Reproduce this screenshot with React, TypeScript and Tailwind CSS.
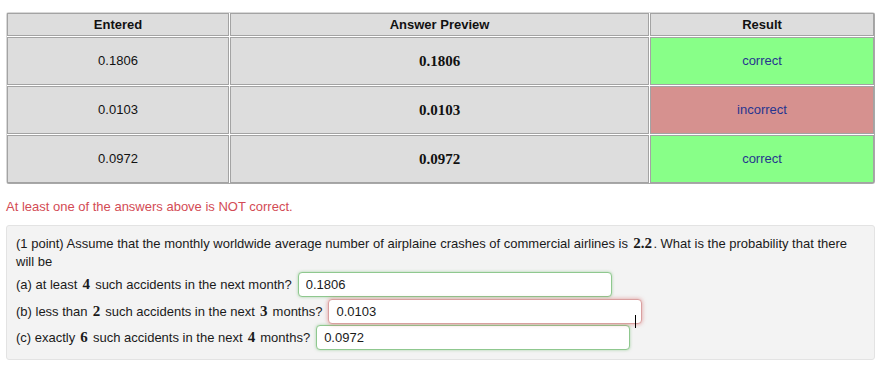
import React from "react";

const ROWS = [
  { entered: "0.1806", preview: "0.1806", ok: true },
  { entered: "0.0103", preview: "0.0103", ok: false },
  { entered: "0.0972", preview: "0.0972", ok: true },
];

const cell =
  "flex items-center justify-center border border-[#a3a3a3] bg-[#dddddd]";

function Num({ children }: { children: React.ReactNode }) {
  return (
    <b className="font-['Liberation_Serif',serif] text-[15px] font-bold">
      {children}
    </b>
  );
}

// inline getallen in de vraag hebben wat extra ruimte (zoals mathjax)
function M({ children }: { children: React.ReactNode }) {
  return (
    <b className="mx-[1.5px] font-['Liberation_Serif',serif] text-[15px] font-bold">
      {children}
    </b>
  );
}

export default function App() {
  return (
    <main className="min-h-screen bg-white pl-[6px] pt-[12px] font-['Liberation_Sans',Arial,sans-serif] text-[13px] text-[#111]">
      {/* resultaten tabel */}
      <div className="grid w-[869px] grid-cols-[222px_419px_224px] gap-px rounded-[3px] border border-t-[#d8d8d8] border-l-[#d8d8d8] border-r-[#a8a8a8] border-b-[#a8a8a8] bg-white">
        <div className={`${cell} h-[23px] font-bold`}>Entered</div>
        <div className={`${cell} h-[23px] font-bold`}>Answer Preview</div>
        <div className={`${cell} h-[23px] font-bold`}>Result</div>
        {ROWS.map((r, i) => (
          <React.Fragment key={i}>
            <div className={`${cell} h-[48px]`}>{r.entered}</div>
            <div className={`${cell} h-[48px]`}>
              <Num>{r.preview}</Num>
            </div>
            <div
              className={`flex h-[48px] items-center justify-center border border-[#a3a3a3] text-[#26358f] ${
                r.ok ? "bg-[#88ff88]" : "bg-[#d6918f]"
              }`}
            >
              {r.ok ? "correct" : "incorrect"}
            </div>
          </React.Fragment>
        ))}
      </div>

      <p className="mt-[15px] leading-[15px] text-[#d34b55]">
        At least one of the answers above is NOT correct.
      </p>

      {/* vraag */}
      <div className="mt-[11px] w-[869px] rounded-[3px] border border-[#e3e3e3] bg-[#f3f3f3] px-[9px] pb-[8px] pt-[8px] text-[#1a1a1a]">
        <p className="leading-[18px]">
          (1 point) Assume that the monthly worldwide average number of airplaine
          crashes of commercial airlines is <M>2.2</M>. What is the probability
          that there will be
        </p>
        <div className="flex h-[27px] items-center gap-[6px]">
          <span>
            (a) at least <M>4</M> such accidents in the next month?
          </span>
          <input
            readOnly
            value="0.1806"
            className="h-[25px] w-[314px] rounded-[4px] border border-[#8fc88f] bg-white px-[7px] text-[13px] shadow-[0_0_3px_rgba(90,180,90,0.5)] outline-none"
          />
        </div>
        <div className="flex h-[26px] items-center gap-[6px]">
          <span>
            (b) less than <M>2</M> such accidents in the next <M>3</M> months?
          </span>
          <div className="relative">
            <input
              readOnly
              value="0.0103"
              className="h-[25px] w-[314px] rounded-[4px] border border-[#d9a0a0] bg-white px-[7px] text-[13px] shadow-[0_0_4px_rgba(210,80,80,0.55)] outline-none"
            />
            <span className="absolute left-[307px] top-[16px] h-[13px] w-px bg-black" />
          </div>
        </div>
        <div className="flex h-[27px] items-center gap-[6px]">
          <span>
            (c) exactly <M>6</M> such accidents in the next <M>4</M> months?
          </span>
          <input
            readOnly
            value="0.0972"
            className="h-[25px] w-[314px] rounded-[4px] border border-[#8fc88f] bg-white px-[7px] text-[13px] shadow-[0_0_3px_rgba(90,180,90,0.5)] outline-none"
          />
        </div>
      </div>
    </main>
  );
}
